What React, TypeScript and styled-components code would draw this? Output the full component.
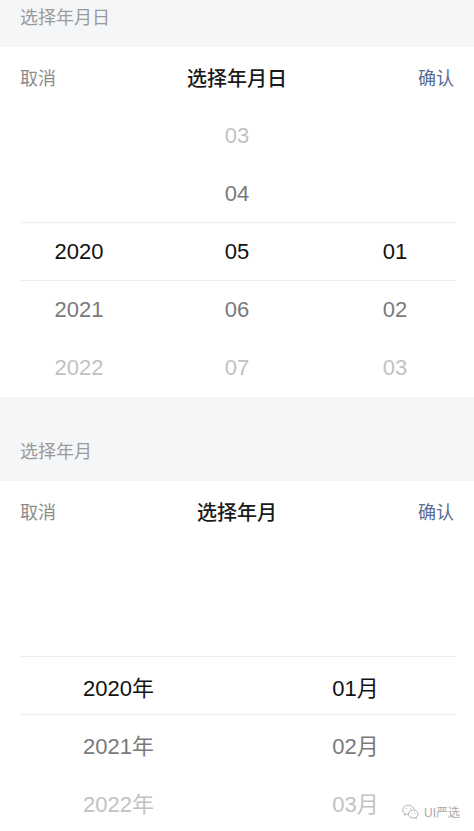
import React from "react";
import styled, { createGlobalStyle } from "styled-components";

const GlobalStyle = createGlobalStyle`
  html, body {
    margin: 0;
    padding: 0;
    background: #ffffff;
  }
  body {
    font-family: "Liberation Sans", "Noto Sans CJK SC", sans-serif;
    -webkit-font-smoothing: antialiased;
  }
`;

const ROW_HEIGHT = 58;

const DATE_COLUMNS = [
  ["", "", "2020", "2021", "2022"],
  ["03", "04", "05", "06", "07"],
  ["", "", "01", "02", "03"],
];

const MONTH_COLUMNS = [
  ["", "", "2020年", "2021年", "2022年"],
  ["", "", "01月", "02月", "03月"],
];

type Demo = {
  label: string;
  title: string;
  columns: string[][];
};

const DEMOS: Demo[] = [
  { label: "选择年月日", title: "选择年月日", columns: DATE_COLUMNS },
  { label: "选择年月", title: "选择年月", columns: MONTH_COLUMNS },
];

const WeChatIcon = () => (
  <svg width="17" height="15" viewBox="0 0 17 15" fill="none" stroke="#b0b0b0" strokeWidth="1">
    <path d="M6.5 1.2c-3.2 0-5.8 2.1-5.8 4.7 0 1.5.8 2.8 2.1 3.6l-.5 1.7 2-1.1c.7.2 1.4.3 2.2.3" />
    <path d="M12.1 5.4c-.6-2.4-2.9-4.1-5.6-4.2" />
    <path d="M11.2 6c-2.7 0-4.9 1.8-4.9 4s2.2 4 4.9 4c.6 0 1.2-.1 1.7-.3l1.600 .9-.4-1.4c1.2-.7 1.9-1.9 1.9-3.2 0-2.2-2.2-4-4.8-4z" />
    <circle cx="4.5" cy="4.6" r=".6" fill="#b0b0b0" stroke="none" />
    <circle cx="8.4" cy="4.6" r=".6" fill="#b0b0b0" stroke="none" />
    <circle cx="9.6" cy="9.2" r=".5" fill="#b0b0b0" stroke="none" />
    <circle cx="12.8" cy="9.2" r=".5" fill="#b0b0b0" stroke="none" />
  </svg>
);

const App = () => {
  return (
    <Page>
      <GlobalStyle />
      <Scroller>
        {DEMOS.map((demo) => (
          <Section key={demo.label}>
            <Band>
              <BandLabel>{demo.label}</BandLabel>
            </Band>
            <Header>
              <Cancel>取消</Cancel>
              <Title>{demo.title}</Title>
              <Confirm>确认</Confirm>
            </Header>
            <Picker $cols={demo.columns.length}>
              {demo.columns.map((col, ci) => (
                <Column key={ci}>
                  {col.map((item, ri) => (
                    <Cell key={ri} $distance={Math.abs(ri - 2)}>
                      {item}
                    </Cell>
                  ))}
                </Column>
              ))}
              <Indicator />
            </Picker>
          </Section>
        ))}
      </Scroller>
      <Watermark>
        <WeChatIcon />
        <WatermarkText>UI严选</WatermarkText>
      </Watermark>
    </Page>
  );
};

export default App;

const Page = styled.div`
  position: relative;
  width: 474px;
  height: 831px;
  overflow: hidden;
  background: #ffffff;
`;

const Scroller = styled.div`
  display: flex;
  flex-direction: column;
  margin-top: -37px;
`;

const Section = styled.section`
  display: flex;
  flex-direction: column;
`;

const Band = styled.div`
  display: flex;
  align-items: flex-end;
  height: 84px;
  padding: 0 20px 19px;
  box-sizing: border-box;
  background-color: #f5f6f8;
`;

const BandLabel = styled.span`
  font-size: 18px;
  line-height: 20px;
  color: #9a9a9a;
`;

const Header = styled.div`
  display: grid;
  grid-template-columns: 1fr auto 1fr;
  align-items: center;
  height: 60px;
  padding: 0 20px;
  box-sizing: border-box;
`;

const Cancel = styled.span`
  justify-self: start;
  font-size: 18px;
  color: #8c8c8c;
`;

const Title = styled.span`
  font-size: 20px;
  font-weight: 500;
  color: #1a1a1a;
`;

const Confirm = styled.span`
  justify-self: end;
  font-size: 18px;
  color: #576b95;
`;

const Picker = styled.div<{ $cols: number }>`
  position: relative;
  display: grid;
  grid-template-columns: repeat(${(p) => p.$cols}, 1fr);
  height: ${ROW_HEIGHT * 5}px;
`;

const Column = styled.div`
  display: flex;
  flex-direction: column;
`;

const CELL_COLORS = ["#111111", "#7a7a7a", "#c2c2c2"];

const Cell = styled.div<{ $distance: number }>`
  display: flex;
  align-items: center;
  justify-content: center;
  height: ${ROW_HEIGHT}px;
  font-size: 22px;
  color: ${(p) => CELL_COLORS[p.$distance]};
`;

const Indicator = styled.div`
  position: absolute;
  left: 20px;
  right: 18px;
  top: ${ROW_HEIGHT * 2 - 1}px;
  height: ${ROW_HEIGHT + 1}px;
  border-top: 1px solid #eeeeee;
  border-bottom: 1px solid #eeeeee;
  box-sizing: border-box;
  pointer-events: none;
`;

const Watermark = styled.div`
  position: absolute;
  right: 14px;
  bottom: 11px;
  display: flex;
  align-items: center;
  gap: 5px;
`;

const WatermarkText = styled.span`
  font-size: 12px;
  color: #a8a8a8;
`;
